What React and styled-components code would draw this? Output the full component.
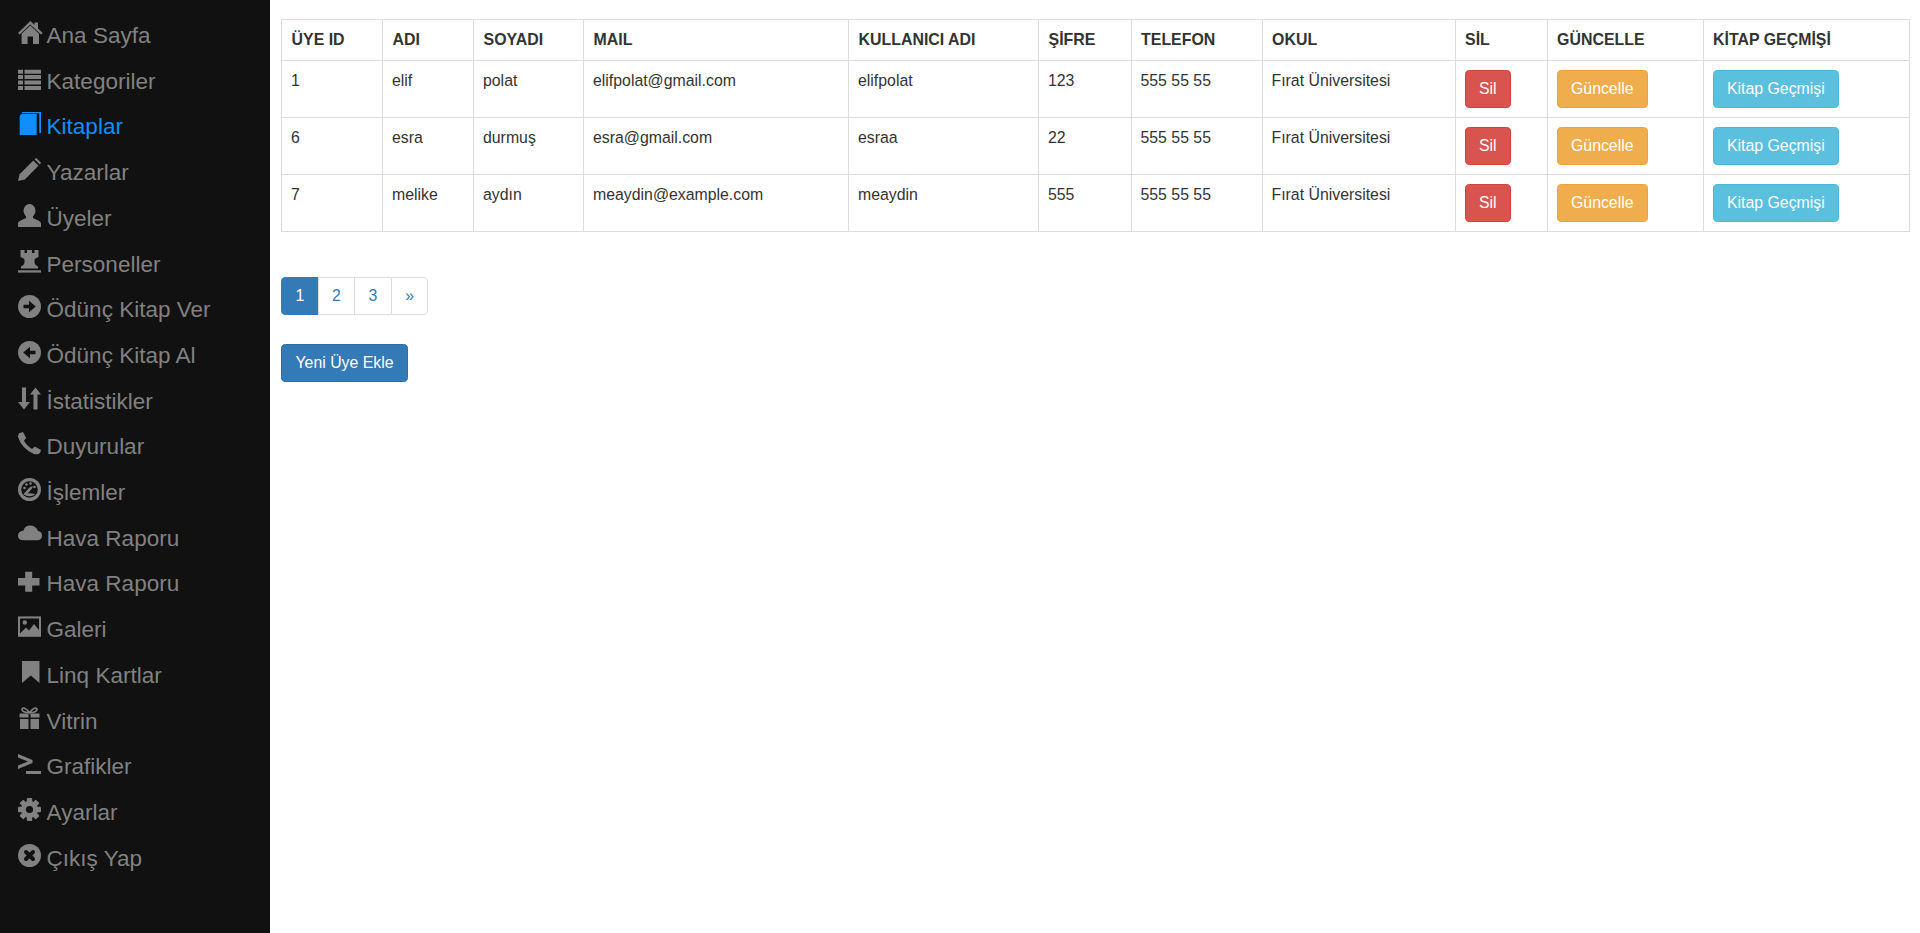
import React from "react";
import styled, { createGlobalStyle } from "styled-components";

const GlobalStyle = createGlobalStyle`
  html, body {
    margin: 0;
    padding: 0;
    background: #fff;
  }
  body {
    font-family: "Liberation Sans", Arial, sans-serif;
    font-size: 15.85px;
    line-height: 22.857px;
    color: #333;
  }
  * {
    box-sizing: border-box;
  }
`;

const Page = styled.div`
  display: flex;
  min-height: 100vh;
`;

const Sidebar = styled.nav`
  flex: 0 0 270px;
  background: #111;
  padding-top: 13.2px;
`;

const NavLink = styled.a`
  display: flex;
  height: 45.71px;
  padding: 6.857px 8px 6.857px 18px;
  font-size: 22.5px;
  line-height: 32px;
  text-decoration: none;
  white-space: pre;
  color: ${({ $active }) => ($active ? "#0f8fff" : "#818181")};
`;

const IconSvg = styled.svg`
  flex: none;
  width: 23px;
  height: 23px;
  margin: 1px 5.6px 0 0;
  overflow: visible;
  fill: currentColor;
`;

const Main = styled.main`
  flex: 1;
  min-width: 0;
  padding: 18.6px 11px 0 11px;
`;

const Table = styled.table`
  width: 100%;
  table-layout: fixed;
  border-collapse: collapse;
  border: 1px solid #ddd;
`;

const Col = styled.col`
  width: ${({ $w }) => $w}px;
`;

const Th = styled.th`
  padding: 9px 9px 9px 9.6px;
  border: 1px solid #ddd;
  font-size: 15.9px;
  font-weight: 700;
  text-align: left;
  vertical-align: bottom;
`;

const Td = styled.td`
  padding: 9px;
  border: 1px solid #ddd;
  vertical-align: top;
`;

const colors = {
  danger: ["#d9534f", "#d43f3a"],
  warning: ["#f0ad4e", "#eea236"],
  info: ["#5bc0de", "#46b8da"],
  primary: ["#337ab7", "#2e6da4"],
};

const Button = styled.a`
  display: inline-block;
  height: 38px;
  padding: 6.5px 13.5px;
  border: 1.14px solid ${({ $kind }) => colors[$kind][1]};
  border-radius: 4.57px;
  background: ${({ $kind }) => colors[$kind][0]};
  color: #fff;
  font-size: 15.85px;
  line-height: 22.857px;
  white-space: nowrap;
  vertical-align: top;
`;

const Pagination = styled.ul`
  display: flex;
  margin: 45px 0 29px;
  padding: 0;
  list-style: none;
`;

const PageItem = styled.li`
  height: 38px;
  margin-left: -1px;
  padding: 6.5px 13.4px;
  border: 1.14px solid ${({ $active }) => ($active ? "#337ab7" : "#ddd")};
  background: ${({ $active }) => ($active ? "#337ab7" : "#fff")};
  color: ${({ $active }) => ($active ? "#fff" : "#337ab7")};

  &:first-child {
    margin-left: 0;
    border-radius: 4.57px 0 0 4.57px;
  }
  &:last-child {
    border-radius: 0 4.57px 4.57px 0;
  }
`;

const bg = "#111";

const cogTeeth = [0, 45, 90, 135];

const icons = {
  home: (
    <>
      <path d="M12.3 0 16.5 4V1.5H20V7.5L24.7 12 23 13.6 12.3 3.6 1.7 13.6 0 12Z" />
      <path d="M12.3 4.6 21 12.8V23H15V15.5H9.6V23H3.6V12.8Z" />
    </>
  ),
  list: (
    <path d="M0 2.7H5V6.7H0ZM6.5 2.7H23V6.7H6.5ZM0 8H5V12H0ZM6.5 8H23V12H6.5ZM0 13.5H5V17.5H0ZM6.5 13.5H23V17.5H6.5ZM0 19H5V23H0ZM6.5 19H23V23H6.5Z" />
  ),
  book: (
    <>
      <path d="M4.7 2H18.7V23H1.7V5Q1.7 2 4.7 2Z" />
      <path d="M4 0H23V21H21.3V1.3H4Z" />
    </>
  ),
  pencil: (
    <>
      <path d="M0 23 1.6 16.2 15.3 2.5 20.5 7.7 6.8 21.4Z" />
      <path d="M16.6 1.2 17.4.4Q18-.2 18.8.4L22.6 4.2Q23.2 5 22.6 5.6L21.8 6.4Z" />
    </>
  ),
  user: (
    <>
      <ellipse cx="11.5" cy="6.8" rx="6" ry="6.8" />
      <path d="M0 23V19.5C0 17 4.5 16 8 14V11H15V14C18.5 16 23 17 23 19.5V23Z" />
    </>
  ),
  rook: (
    <>
      <path d="M2.5 0H6.5V3H9V0H14V3H16.5V0H20.5V7Q17 8 16.5 9.5V13Q17 15 20 16.5V18.5H3V16.5Q6 15 6.5 13V9.5Q6 8 2.5 7Z" />
      <path d="M0 20.3H23V22.6H0Z" />
    </>
  ),
  right: (
    <>
      <circle cx="11.5" cy="11.5" r="11.5" />
      <path fill={bg} d="M5.5 9.7H11V5.7L17.8 11.5 11 17.3V13.3H5.5Z" />
    </>
  ),
  left: (
    <>
      <circle cx="11.5" cy="11.5" r="11.5" />
      <path fill={bg} d="M17.5 9.7H12V5.7L5.2 11.5 12 17.3V13.3H17.5Z" />
    </>
  ),
  sort: (
    <path d="M4 .5H8V15H12L6 22.5 0 15H4ZM17.5.5 23 7.5H19.5V22.5H15.5V7.5H12Z" />
  ),
  phone: (
    <path d="M1 1.2 5 0 8.2 6 6 8.5Q8 13 14 17L16.8 14.5 23 18 22 21Q20 23 16 22 4 17 0 5 0 3 1 1.2Z" />
  ),
  dashboard: (
    <>
      <circle cx="11.5" cy="11.5" r="11.5" />
      <circle cx="11.5" cy="11.5" r="8.3" fill={bg} />
      <circle cx="6.5" cy="10" r="1.3" />
      <circle cx="8.5" cy="6.5" r="1.3" />
      <circle cx="12.5" cy="5.5" r="1.3" />
      <circle cx="16.5" cy="9" r="1.3" />
      <path d="M5.5 16.5Q11.5 8 14.8 8.2 15 10 9.5 15.5 12 14.5 17.5 16.5 11.5 20 5.5 16.5Z" />
    </>
  ),
  cloud: (
    <path d="M6 16.3H19Q24 16.3 24 11.5 24 7.5 20 7 18 1.5 12 1.5 7 1.5 5.5 6.5 0 7.5 0 11.8 0 16.3 6 16.3Z" />
  ),
  plus: <path d="M7.2 2.7H14.2V9H21.5V16.5H14.2V22.7H7.2V16.5H0V9H7.2Z" />,
  picture: (
    <>
      <path d="M0 1.4H23V21.8H0Z" />
      <path fill={bg} d="M2 3.4H21V15L16 9 11 15.5 8 12.5 2 18.5Z" />
      <circle cx="6.8" cy="7.5" r="2.2" />
    </>
  ),
  bookmark: <path d="M4 0H21.5V22L12.8 14.5 4 22Z" />,
  gift: (
    <>
      <path d="M1.5 6.5H10.5V10.5H1.5ZM12.5 6.5H21.5V10.5H12.5ZM2 12H10.5V22H2ZM12.5 12H21V22H12.5Z" />
      <path
        fill="none"
        stroke="currentColor"
        strokeWidth="1.6"
        d="M11.5 5.7C8 .5 4.5.2 4 2.2 3.6 4.2 7 5.7 11.5 5.7 16 5.7 19.4 4.2 19 2.2 18.5.2 15 .5 11.5 5.7Z"
      />
    </>
  ),
  terminal: (
    <path d="M0 2V5.5L10 9.5 0 13.5V17L14.5 11V8ZM8 19H23V22H8Z" />
  ),
  cog: (
    <>
      <circle cx="11.5" cy="11.5" r="8.5" />
      {cogTeeth.map((a) => (
        <rect key={a} x="8.8" y="0" width="5.4" height="23" rx="1" transform={`rotate(${a} 11.5 11.5)`} />
      ))}
      <circle cx="11.5" cy="11.5" r="3.6" fill={bg} />
    </>
  ),
  remove: (
    <>
      <circle cx="11.5" cy="11.5" r="11.5" />
      <path
        fill="none"
        stroke={bg}
        strokeWidth="4"
        strokeLinecap="round"
        d="M8 8 15 15M15 8 8 15"
      />
    </>
  ),
};

const navItems = [
  ["home", "Ana Sayfa"],
  ["list", "Kategoriler"],
  ["book", "Kitaplar", true],
  ["pencil", "Yazarlar"],
  ["user", "Üyeler"],
  ["rook", "Personeller"],
  ["right", "Ödünç Kitap Ver"],
  ["left", "Ödünç Kitap Al"],
  ["sort", "İstatistikler"],
  ["phone", "Duyurular"],
  ["dashboard", "İşlemler"],
  ["cloud", "Hava Raporu"],
  ["plus", "Hava Raporu"],
  ["picture", "Galeri"],
  ["bookmark", "Linq Kartlar"],
  ["gift", "Vitrin"],
  ["terminal", "Grafikler"],
  ["cog", "Ayarlar"],
  ["remove", "Çıkış Yap"],
];

const columns = [
  ["ÜYE ID", 101],
  ["ADI", 91],
  ["SOYADI", 110],
  ["MAIL", 265],
  ["KULLANICI ADI", 190],
  ["ŞİFRE", 92.5],
  ["TELEFON", 131],
  ["OKUL", 193],
  ["SİL", 92],
  ["GÜNCELLE", 156],
  ["KİTAP GEÇMİŞİ", 206.5],
];

const members = [
  { id: 1, name: "elif", surname: "polat", mail: "elifpolat@gmail.com", user: "elifpolat", pass: "123" },
  { id: 6, name: "esra", surname: "durmuş", mail: "esra@gmail.com", user: "esraa", pass: "22" },
  { id: 7, name: "melike", surname: "aydın", mail: "meaydin@example.com", user: "meaydin", pass: "555" },
];

const App = () => {
  return (
    <Page>
      <GlobalStyle />
      <Sidebar>
        {navItems.map(([icon, label, active]) => (
          <NavLink key={icon} $active={active}>
            <IconSvg viewBox="0 0 23 23">{icons[icon]}</IconSvg>
            {label}
          </NavLink>
        ))}
      </Sidebar>
      <Main>
        <Table>
          <colgroup>
            {columns.map(([title, w]) => (
              <Col key={title} $w={w} />
            ))}
          </colgroup>
          <thead>
            <tr>
              {columns.map(([title]) => (
                <Th key={title}>{title}</Th>
              ))}
            </tr>
          </thead>
          <tbody>
            {members.map((m) => (
              <tr key={m.id}>
                <Td>{m.id}</Td>
                <Td>{m.name}</Td>
                <Td>{m.surname}</Td>
                <Td>{m.mail}</Td>
                <Td>{m.user}</Td>
                <Td>{m.pass}</Td>
                <Td>555 55 55</Td>
                <Td>Fırat Üniversitesi</Td>
                <Td>
                  <Button $kind="danger">Sil</Button>
                </Td>
                <Td>
                  <Button $kind="warning">Güncelle</Button>
                </Td>
                <Td>
                  <Button $kind="info">Kitap Geçmişi</Button>
                </Td>
              </tr>
            ))}
          </tbody>
        </Table>
        <Pagination>
          <PageItem $active>1</PageItem>
          <PageItem>2</PageItem>
          <PageItem>3</PageItem>
          <PageItem>»</PageItem>
        </Pagination>
        <Button $kind="primary">Yeni Üye Ekle</Button>
      </Main>
    </Page>
  );
};

export default App;
